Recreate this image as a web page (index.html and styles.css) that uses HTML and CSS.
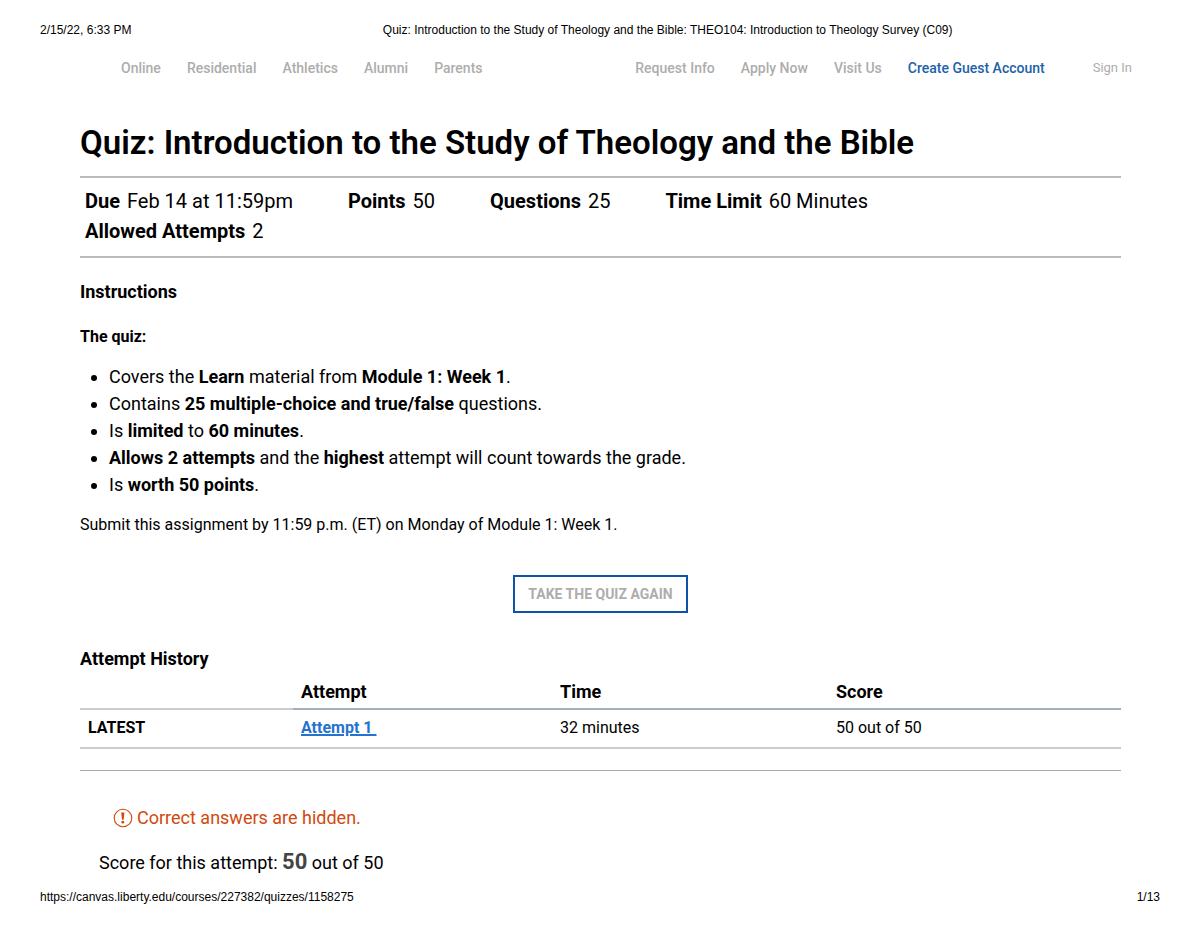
FILE: index.html
```html
<!DOCTYPE html>
<html lang="en">
<head>
  <meta charset="UTF-8" />
  <meta name="viewport" content="width=device-width, initial-scale=1" />
  <title>Quiz: Introduction to the Study of Theology and the Bible</title>
  <link rel="stylesheet" href="styles.css">
</head>
<body>
  <header class="print-header">
    <span>2/15/22, 6:33 PM</span>
    <span class="doc-title">Quiz: Introduction to the Study of Theology and the Bible: THEO104: Introduction to Theology Survey (C09)</span>
  </header>

  <nav class="top-nav">
    <div class="nav-group">
      <a href="#">Online</a>
      <a href="#">Residential</a>
      <a href="#">Athletics</a>
      <a href="#">Alumni</a>
      <a href="#">Parents</a>
    </div>
    <div class="nav-group">
      <a href="#">Request Info</a>
      <a href="#">Apply Now</a>
      <a href="#">Visit Us</a>
      <a href="#" class="guest">Create Guest Account</a>
      <a href="#" class="sign-in">Sign In</a>
    </div>
  </nav>

  <main class="quiz">
    <h1>Quiz: Introduction to the Study of Theology and the Bible</h1>

    <ul class="details">
      <li><strong>Due</strong> Feb 14 at 11:59pm</li>
      <li><strong>Points</strong> 50</li>
      <li><strong>Questions</strong> 25</li>
      <li><strong>Time Limit</strong> 60 Minutes</li>
      <li><strong>Allowed Attempts</strong> 2</li>
    </ul>

    <!-- Instructions -->
    <section class="instructions">
      <h2>Instructions</h2>
      <h3>The quiz:</h3>
      <ul>
        <li>Covers the <strong>Learn</strong> material from <strong>Module 1: Week 1</strong>.</li>
        <li>Contains <strong>25 multiple-choice and true/false</strong> questions.</li>
        <li>Is <strong>limited</strong> to <strong>60 minutes</strong>.</li>
        <li><strong>Allows 2 attempts</strong> and the <strong>highest</strong> attempt will count towards the grade.</li>
        <li>Is <strong>worth 50 points</strong>.</li>
      </ul>
      <p>Submit this assignment by 11:59 p.m. (ET) on Monday of Module 1: Week 1.</p>
    </section>

    <div class="actions">
      <button type="button">TAKE THE QUIZ AGAIN</button>
    </div>

    <!-- Attempt history -->
    <section class="history">
      <h2>Attempt History</h2>
      <table>
        <thead>
          <tr>
            <td class="col-kept"></td>
            <th class="col-attempt" scope="col">Attempt</th>
            <th class="col-time" scope="col">Time</th>
            <th scope="col">Score</th>
          </tr>
        </thead>
        <tbody>
          <tr>
            <th scope="row">LATEST</th>
            <td><a href="#">Attempt 1&nbsp;</a></td>
            <td>32 minutes</td>
            <td>50 out of 50</td>
          </tr>
        </tbody>
      </table>
    </section>

    <section class="results">
      <p class="hidden-note">
        <svg width="20" height="20" viewBox="0 0 20 20" aria-hidden="true">
          <circle cx="10" cy="10" r="8.8" fill="none" stroke="#d2490c" stroke-width="1.1" />
          <path d="M8.2 4.4h3.2l-.7 7.4H9z" fill="#d2490c" />
          <circle cx="9.8" cy="14.2" r="1.4" fill="#d2490c" />
        </svg>
        Correct answers are hidden.
      </p>
      <p class="score">Score for this attempt: <strong>50</strong> out of 50</p>
    </section>
  </main>

  <footer class="print-footer">
    <span>https://canvas.liberty.edu/courses/227382/quizzes/1158275</span>
    <span>1/13</span>
  </footer>
</body>
</html>
```
FILE: styles.css
```css
* {
  box-sizing: border-box;
}

body {
  margin: 0;
  padding: 20px 40px 0;
  background-color: #fff;
  color: #000;
  font-family: Roboto, sans-serif;
  font-size: 16px;
}

h1, h2, h3, p, ul {
  margin: 0;
  padding: 0;
}

.print-header, .print-footer {
  display: flex;
  justify-content: space-between;
  font-family: "Liberation Sans", Arial, sans-serif;
  font-size: 12px;
  line-height: 20px;
}

.doc-title {
  flex: 1;
  padding-left: 44px;
  text-align: center;
}

.top-nav {
  display: flex;
  justify-content: space-between;
  padding: 18px 28px 0 81px;
  font-size: 14px;
  line-height: 20px;
}

.nav-group {
  display: flex;
  gap: 26px;
}

.nav-group a {
  color: #adadad;
  font-weight: 500;
  text-decoration: none;
}

.nav-group .guest {
  color: #1d62a8;
}

.nav-group .sign-in {
  margin-left: 22px;
  font-size: 13px;
  font-weight: 400;
}

.quiz {
  padding: 45px 39px 0 40px;
}

h1 {
  font-size: 33px;
  font-weight: 600;
  line-height: 40px;
  margin-bottom: 13px;
}

.details {
  display: flex;
  flex-wrap: wrap;
  column-gap: 55px;
  padding: 8px 5px 10px;
  border-top: 2px solid #bbb;
  border-bottom: 2px solid #bbb;
  font-size: 20px;
  line-height: 30px;
  list-style: none;
}

.details li:nth-child(4) {
  margin-right: 100px;
}

.details strong {
  margin-right: 2px;
}

h2 {
  font-size: 18px;
  line-height: 24px;
}

.instructions {
  padding-top: 22px;
}

h3 {
  margin-top: 23px;
  font-size: 16px;
  line-height: 20px;
}

.instructions ul {
  margin-top: 16px;
  padding-left: 29px;
  font-size: 18px;
  line-height: 27px;
}

.instructions p {
  margin-top: 17px;
  font-size: 16px;
  line-height: 20px;
}

.actions {
  padding: 40px 0 34px;
  text-align: center;
}

button {
  height: 38px;
  padding: 0 13px;
  border: 2px solid #0d53a6;
  background-color: #fff;
  color: #adadad;
  font-family: Roboto, sans-serif;
  font-size: 14px;
  font-weight: 700;
  cursor: pointer;
}

.history {
  padding-bottom: 21px;
  border-bottom: 1px solid #aaa;
}

table {
  width: 100%;
  margin-top: 4px;
  border-collapse: collapse;
  table-layout: fixed;
}

th, td {
  padding: 6px 8px 7px;
  border-bottom: 2px solid #c7cdd1;
  line-height: 24px;
  font-size: 16px;
  text-align: left;
}

thead th {
  padding: 5px 8px 4px;
  border-bottom-color: #a5afb9;
  font-size: 18px;
}

thead td {
  padding: 0;
}

.col-kept {
  width: 213px;
}

.col-attempt {
  width: 259px;
}

.col-time {
  width: 276px;
}

td a {
  color: #2573d0;
  font-weight: 700;
  text-decoration-thickness: 2px;
}

.results {
  padding: 35px 19px 0;
}

.hidden-note {
  display: flex;
  align-items: center;
  gap: 4px;
  padding-left: 14px;
  color: #d2490c;
  font-size: 18px;
  line-height: 24px;
}

.score {
  margin-top: 20px;
  font-size: 18px;
  line-height: 24px;
}

.score strong {
  color: #444;
  font-size: 22px;
}

.print-footer {
  padding-top: 12px;
}
```
